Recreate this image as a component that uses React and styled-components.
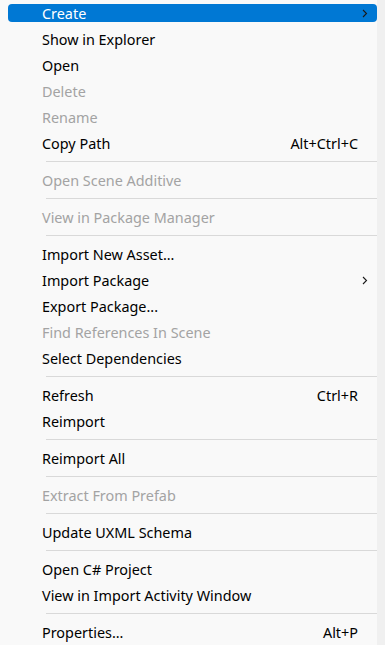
import React from "react";
import styled, { createGlobalStyle } from "styled-components";

const Global = createGlobalStyle`
  html, body { margin: 0; padding: 0; background: #f0f0f0; }
  body { font-family: "Noto Sans", "Open Sans", sans-serif; }
`;

const Menu = styled.div`
  width: 377px;
  background: #f9f9f9;
  display: flex;
  flex-direction: column;
  padding-bottom: 4px;
`;

const Row = styled.div`
  height: 26px;
  display: flex;
  align-items: center;
  padding-left: 8px;
`;

const Pill = styled.div`
  flex: 1;
  height: 18px;
  display: flex;
  align-items: center;
  padding: 0 5px 0 34px;
  border-radius: 4px;
  background: ${(p) => (p.$active ? "#0078d4" : "transparent")};
  color: ${(p) => (p.$active ? "#ffffff" : p.$disabled ? "#a3a3a3" : "#000000")};
  font-size: 14.4px;
  white-space: nowrap;
`;

const Label = styled.span`
  flex: 1;
`;

const Shortcut = styled.span`
  color: #000000;
`;

const Arrow = styled.span`
  width: 14px;
  display: flex;
  justify-content: center;
  align-items: center;
`;

const SepRow = styled.div`
  height: 11px;
  display: flex;
  align-items: center;
  padding-left: 46px;
`;

const Line = styled.div`
  flex: 1;
  height: 1px;
  background: #d9d9d9;
`;

const Chevron = () => (
  <svg width="6" height="9" viewBox="0 0 6 9">
    <polyline points="1,1 4.5,4.5 1,8" fill="none" stroke="#1a1a1a" strokeWidth="1.1" />
  </svg>
);

const items = [
  { t: "Create", active: true, sub: true },
  { t: "Show in Explorer" },
  { t: "Open" },
  { t: "Delete", d: true },
  { t: "Rename", d: true },
  { t: "Copy Path", k: "Alt+Ctrl+C" },
  "sep",
  { t: "Open Scene Additive", d: true },
  "sep",
  { t: "View in Package Manager", d: true },
  "sep",
  { t: "Import New Asset..." },
  { t: "Import Package", sub: true },
  { t: "Export Package..." },
  { t: "Find References In Scene", d: true },
  { t: "Select Dependencies" },
  "sep",
  { t: "Refresh", k: "Ctrl+R" },
  { t: "Reimport" },
  "sep",
  { t: "Reimport All" },
  "sep",
  { t: "Extract From Prefab", d: true },
  "sep",
  { t: "Update UXML Schema" },
  "sep",
  { t: "Open C# Project" },
  { t: "View in Import Activity Window" },
  "sep",
  { t: "Properties...", k: "Alt+P" },
];

export default function App() {
  return (
    <>
      <Global />
      <Menu>
        {items.map((it, i) =>
          it === "sep" ? (
            <SepRow key={i}>
              <Line />
            </SepRow>
          ) : (
            <Row key={i}>
              <Pill $active={it.active} $disabled={it.d}>
                <Label>{it.t}</Label>
                {it.k && <Shortcut>{it.k}</Shortcut>}
                <Arrow>{it.sub && <Chevron />}</Arrow>
              </Pill>
            </Row>
          )
        )}
      </Menu>
    </>
  );
}
